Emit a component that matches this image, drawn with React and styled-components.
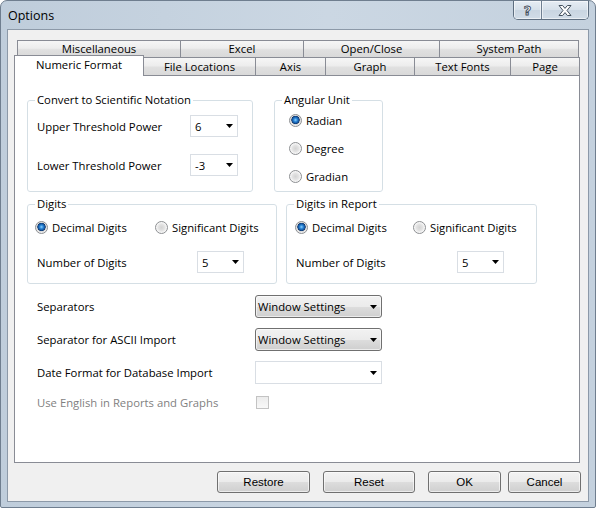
import React from "react";
import styled, { createGlobalStyle } from "styled-components";

const GlobalStyle = createGlobalStyle`
  html, body {
    margin: 0;
    padding: 0;
    background: #ffffff;
  }
  body {
    font-family: "Open Sans", "Noto Sans", sans-serif;
    font-size: 11.3px;
    color: #000;
  }
  * {
    box-sizing: border-box;
  }
`;

// window frame + caption
const Window = styled.div`
  width: 596px;
  height: 508px;
  border: 1px solid #6f7e8f;
  border-radius: 7px 7px 2px 2px;
  background: linear-gradient(90deg, #bfcddb 0%, #cbd7e3 55%, #c4d1de 100%);
  display: flex;
  flex-direction: column;
  overflow: hidden;
`;

const TitleBar = styled.div`
  height: 28px;
  display: flex;
  align-items: flex-start;
  flex-shrink: 0;
`;

const Title = styled.div`
  margin: 7px 0 0 7px;
  font-size: 12.5px;
  line-height: 16px;
`;

const CaptionButtons = styled.div`
  margin-left: auto;
  margin-right: 6px;
  display: flex;
  height: 19px;
  border: 1px solid #5e6e80;
  border-top: none;
  border-radius: 0 0 5px 5px;
  overflow: hidden;
`;

const CaptionButton = styled.div`
  width: ${(p) => p.$w}px;
  height: 100%;
  display: flex;
  align-items: center;
  justify-content: center;
  background: linear-gradient(#e6edf4, #d6e0ea 50%, #c9d5e1 51%, #d1dce7);
  box-shadow: inset 0 0 0 1px rgba(255, 255, 255, 0.55);
  border-right: ${(p) => (p.$divider ? "1px solid #6f7f91" : "none")};
`;

const HelpGlyph = styled.span`
  font-family: "DejaVu Sans", sans-serif;
  font-weight: bold;
  font-size: 13px;
  line-height: 1;
  color: #ffffff;
  -webkit-text-stroke: 0.9px #3f4c5b;
`;

// client area
const Client = styled.div`
  flex: 1;
  margin: 0 6px 5px 6px;
  border: 1px solid #8c99a8;
  background: #f0f0f0;
  padding: 10px 0 0 6px;
  display: flex;
  flex-direction: column;
`;

const TabRow = styled.div`
  display: flex;
  height: ${(p) => p.$h}px;
  padding-left: ${(p) => p.$indent || 0}px;
  align-items: flex-end;
`;

const Tab = styled.div`
  width: ${(p) => p.$w}px;
  height: ${(p) => (p.$active ? "21px" : "100%")};
  margin-right: -1px;
  margin-bottom: ${(p) => (p.$active ? "-1px" : "0")};
  border: 1px solid #898c95;
  border-bottom: none;
  background: ${(p) =>
    p.$active
      ? "#ffffff"
      : "linear-gradient(#f6f6f6, #ededed 45%, #e0e0e0 55%, #d9d9d9)"};
  position: ${(p) => (p.$active ? "relative" : "static")};
  z-index: ${(p) => (p.$active ? 2 : "auto")};
  display: flex;
  justify-content: center;
  align-items: ${(p) => (p.$active ? "flex-start" : "center")};
  padding-top: ${(p) => (p.$active ? "1px" : "0")};
  line-height: 16px;
  white-space: nowrap;
`;

const Panel = styled.div`
  width: 566px;
  height: 388px;
  background: #ffffff;
  border: 1px solid #898c95;
  padding: 16px 0 0 12px;
`;

const GroupRow = styled.div`
  display: flex;
  gap: ${(p) => p.$gap}px;
  margin-top: ${(p) => p.$top || 0}px;
  align-items: flex-start;
`;

const GroupBox = styled.fieldset`
  width: ${(p) => p.$w}px;
  margin: 0;
  padding: 0;
  min-width: 0;
  border: 1px solid #d5dfe5;
  border-radius: 3px;
`;

const Legend = styled.legend`
  margin-left: 7px;
  padding: 0 2px;
  line-height: 16px;
`;

const GroupBody = styled.div`
  padding: ${(p) => p.$pad};
  display: flex;
  flex-direction: column;
  gap: ${(p) => p.$gap || 0}px;
`;

const SettingRow = styled.div`
  display: flex;
  align-items: center;
  height: ${(p) => p.$h || 22}px;
`;

const RowLabel = styled.div`
  width: ${(p) => p.$w}px;
  padding-left: ${(p) => p.$indent || 0}px;
  color: ${(p) => (p.$disabled ? "#7f7f7f" : "#000")};
  white-space: nowrap;
`;

const Combo = styled.div`
  width: ${(p) => p.$w}px;
  height: ${(p) => p.$h || 22}px;
  display: flex;
  align-items: center;
  justify-content: space-between;
  padding: ${(p) => (p.$raised ? "0 4px 0 2px" : "0 4px 0 4px")};
  border: 1px solid ${(p) => (p.$raised ? "#707070" : "#d9dee4")};
  border-radius: ${(p) => (p.$raised ? "3px" : "0")};
  background: ${(p) =>
    p.$raised
      ? "linear-gradient(#f2f2f2, #ebebeb 50%, #dddddd 51%, #cfcfcf)"
      : "#ffffff"};
  box-shadow: ${(p) =>
    p.$raised ? "inset 0 0 0 1px rgba(255,255,255,0.6)" : "none"};
  white-space: nowrap;
`;

const RadioItem = styled.div`
  display: flex;
  align-items: center;
  gap: 4px;
  width: ${(p) => (p.$w ? `${p.$w}px` : "auto")};
  height: 20px;
`;

const RadioDot = styled.span`
  width: 13px;
  height: 13px;
  border-radius: 50%;
  border: 1px solid #8d8f92;
  flex-shrink: 0;
  background: ${(p) =>
    p.$on
      ? "radial-gradient(circle at 50% 45%, #8fd0ff 0, #2a86d6 1.8px, #134f97 3.4px, #0c3468 3.9px, #d6d6d6 4.4px, #ececec 5.5px)"
      : "radial-gradient(circle at 50% 50%, #d4d4d4 0, #e2e2e2 3px, #f0f0f0 4.5px, #fafafa 5.5px)"};
`;

const RadioRow = styled.div`
  display: flex;
  align-items: center;
`;

const LowerSection = styled.div`
  margin: 11px 0 0 10px;
  display: flex;
  flex-direction: column;
  gap: 10px;
`;

const CheckBox = styled.span`
  width: 13px;
  height: 13px;
  border: 1px solid #c3c3c3;
  background: linear-gradient(#ececec, #f8f8f8);
`;

const ButtonBar = styled.div`
  display: flex;
  margin-top: 8px;
  padding-left: ${(p) => p.$offset}px;
`;

const DialogButton = styled.button`
  width: ${(p) => p.$w}px;
  height: 22px;
  margin-left: ${(p) => p.$gap || 0}px;
  padding: 0;
  border: 1px solid #707070;
  border-radius: 3px;
  background: linear-gradient(#f2f2f2, #ebebeb 50%, #dddddd 51%, #cfcfcf);
  box-shadow: inset 0 0 0 1px rgba(255, 255, 255, 0.6);
  font-family: "Liberation Sans", Arial, sans-serif;
  font-size: 11.5px;
  color: #000;
`;

const Arrow = () => (
  <svg width="7" height="4" viewBox="0 0 7 4">
    <polygon points="0,0 7,0 3.5,4" fill="#000" />
  </svg>
);

const CloseGlyph = () => (
  <svg width="14" height="11" viewBox="0 0 14 11">
    <path
      d="M1 0.5 H4.6 L7 3.4 L9.4 0.5 H13 L9 5.5 L13 10.5 H9.4 L7 7.6 L4.6 10.5 H1 L5 5.5 Z"
      fill="#ffffff"
      stroke="#45525f"
      strokeWidth="1"
      strokeLinejoin="round"
    />
  </svg>
);

const Radio = ({ on, label, w }) => (
  <RadioItem $w={w}>
    <RadioDot $on={on} />
    <span>{label}</span>
  </RadioItem>
);

const backTabs = [
  { label: "Miscellaneous", w: 164 },
  { label: "Excel", w: 124 },
  { label: "Open/Close", w: 137 },
  { label: "System Path", w: 140 },
];

const frontTabs = [
  { label: "Numeric Format", w: 130, active: true },
  { label: "File Locations", w: 113 },
  { label: "Axis", w: 71 },
  { label: "Graph", w: 90 },
  { label: "Text Fonts", w: 97 },
  { label: "Page", w: 70 },
];

const App = () => {
  return (
    <>
      <GlobalStyle />
      <Window>
        <TitleBar>
          <Title>Options</Title>
          <CaptionButtons>
            <CaptionButton $w={28} $divider>
              <HelpGlyph>?</HelpGlyph>
            </CaptionButton>
            <CaptionButton $w={46}>
              <CloseGlyph />
            </CaptionButton>
          </CaptionButtons>
        </TitleBar>

        <Client>
          <TabRow $h={17} $indent={3}>
            {backTabs.map((t) => (
              <Tab key={t.label} $w={t.w}>
                {t.label}
              </Tab>
            ))}
          </TabRow>
          <TabRow $h={18}>
            {frontTabs.map((t) => (
              <Tab key={t.label} $w={t.w} $active={t.active}>
                {t.label}
              </Tab>
            ))}
          </TabRow>

          <Panel>
            <GroupRow $gap={21}>
              <GroupBox $w={226}>
                <Legend>Convert to Scientific Notation</Legend>
                <GroupBody $pad="7px 0 15px 9px" $gap={17}>
                  <SettingRow>
                    <RowLabel $w={153}>Upper Threshold Power</RowLabel>
                    <Combo $w={48}>
                      <span>6</span>
                      <Arrow />
                    </Combo>
                  </SettingRow>
                  <SettingRow>
                    <RowLabel $w={153}>Lower Threshold Power</RowLabel>
                    <Combo $w={48}>
                      <span>-3</span>
                      <Arrow />
                    </Combo>
                  </SettingRow>
                </GroupBody>
              </GroupBox>

              <GroupBox $w={109}>
                <Legend>Angular Unit</Legend>
                <GroupBody $pad="2px 0 5px 14px" $gap={8}>
                  <Radio on label="Radian" />
                  <Radio label="Degree" />
                  <Radio label="Gradian" />
                </GroupBody>
              </GroupBox>
            </GroupRow>

            <GroupRow $gap={9} $top={4}>
              <GroupBox $w={250}>
                <Legend>Digits</Legend>
                <GroupBody $pad="5px 0 10px 7px" $gap={14}>
                  <RadioRow>
                    <Radio on label="Decimal Digits" w={120} />
                    <Radio label="Significant Digits" />
                  </RadioRow>
                  <SettingRow>
                    <RowLabel $w={162} $indent={2}>
                      Number of Digits
                    </RowLabel>
                    <Combo $w={47}>
                      <span>5</span>
                      <Arrow />
                    </Combo>
                  </SettingRow>
                </GroupBody>
              </GroupBox>

              <GroupBox $w={251}>
                <Legend>Digits in Report</Legend>
                <GroupBody $pad="5px 0 10px 8px" $gap={14}>
                  <RadioRow>
                    <Radio on label="Decimal Digits" w={118} />
                    <Radio label="Significant Digits" />
                  </RadioRow>
                  <SettingRow>
                    <RowLabel $w={162} $indent={1}>
                      Number of Digits
                    </RowLabel>
                    <Combo $w={47}>
                      <span>5</span>
                      <Arrow />
                    </Combo>
                  </SettingRow>
                </GroupBody>
              </GroupBox>
            </GroupRow>

            <LowerSection>
              <SettingRow $h={23}>
                <RowLabel $w={218}>Separators</RowLabel>
                <Combo $w={127} $h={23} $raised>
                  <span>Window Settings</span>
                  <Arrow />
                </Combo>
              </SettingRow>
              <SettingRow $h={23}>
                <RowLabel $w={218}>Separator for ASCII Import</RowLabel>
                <Combo $w={127} $h={23} $raised>
                  <span>Window Settings</span>
                  <Arrow />
                </Combo>
              </SettingRow>
              <SettingRow $h={23}>
                <RowLabel $w={218}>Date Format for Database Import</RowLabel>
                <Combo $w={127} $h={23}>
                  <span />
                  <Arrow />
                </Combo>
              </SettingRow>
              <SettingRow $h={17}>
                <RowLabel $w={219} $disabled>
                  Use English in Reports and Graphs
                </RowLabel>
                <CheckBox />
              </SettingRow>
            </LowerSection>
          </Panel>

          <ButtonBar $offset={203}>
            <DialogButton $w={93}>Restore</DialogButton>
            <DialogButton $w={92} $gap={13}>
              Reset
            </DialogButton>
            <DialogButton $w={73} $gap={13}>
              OK
            </DialogButton>
            <DialogButton $w={73} $gap={7}>
              Cancel
            </DialogButton>
          </ButtonBar>
        </Client>
      </Window>
    </>
  );
};

export default App;
